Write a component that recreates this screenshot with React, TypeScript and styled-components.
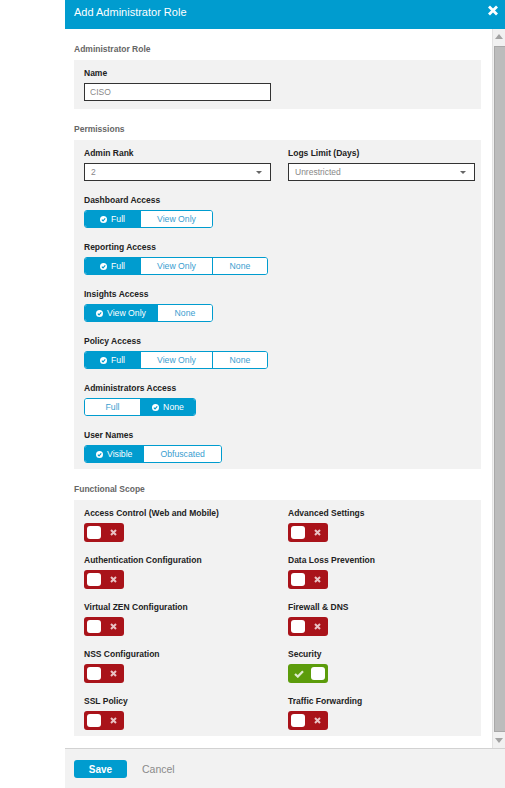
import styled, { createGlobalStyle } from "styled-components";

const BLUE = "#009ccf";

const GlobalStyle = createGlobalStyle`
  html, body {
    margin: 0;
    padding: 0;
    background: #fff;
  }
  body {
    font-family: "Liberation Sans", Arial, sans-serif;
  }
  * {
    box-sizing: border-box;
  }
`;

type Choice = { label: string; active?: boolean };

const permissionGroups: { title: string; choices: Choice[] }[] = [
    {
        title: "Dashboard Access",
        choices: [{ label: "Full", active: true }, { label: "View Only" }],
    },
    {
        title: "Reporting Access",
        choices: [
            { label: "Full", active: true },
            { label: "View Only" },
            { label: "None" },
        ],
    },
    {
        title: "Insights Access",
        choices: [{ label: "View Only", active: true }, { label: "None" }],
    },
    {
        title: "Policy Access",
        choices: [
            { label: "Full", active: true },
            { label: "View Only" },
            { label: "None" },
        ],
    },
    {
        title: "Administrators Access",
        choices: [{ label: "Full" }, { label: "None", active: true }],
    },
    {
        title: "User Names",
        choices: [{ label: "Visible", active: true }, { label: "Obfuscated" }],
    },
];

const scopes: { title: string; on?: boolean }[] = [
    { title: "Access Control (Web and Mobile)" },
    { title: "Advanced Settings" },
    { title: "Authentication Configuration" },
    { title: "Data Loss Prevention" },
    { title: "Virtual ZEN Configuration" },
    { title: "Firewall & DNS" },
    { title: "NSS Configuration" },
    { title: "Security", on: true },
    { title: "SSL Policy" },
    { title: "Traffic Forwarding" },
];

function CheckCircle() {
    return (
        <svg width="7" height="7" viewBox="0 0 8 8">
            <circle cx="4" cy="4" r="4" fill="#fff" />
            <path
                d="M2.1 4.1 L3.5 5.5 L6 2.8"
                stroke={BLUE}
                strokeWidth="1.3"
                fill="none"
            />
        </svg>
    );
}

function ScopeToggle({ on }: { on?: boolean }) {
    return (
        <Toggle $on={!!on}>
            <Knob />
            <Mark>
                {on ? (
                    <svg width="10" height="8" viewBox="0 0 10 8">
                        <path
                            d="M1 4 L3.8 6.6 L9 1.2"
                            stroke="rgba(255,255,255,0.8)"
                            strokeWidth="2.2"
                            fill="none"
                        />
                    </svg>
                ) : (
                    <svg width="7" height="7" viewBox="0 0 7 7">
                        <path
                            d="M1 1 L6 6 M6 1 L1 6"
                            stroke="rgba(255,255,255,0.75)"
                            strokeWidth="2"
                        />
                    </svg>
                )}
            </Mark>
        </Toggle>
    );
}

function Select({ value }: { value: string }) {
    return (
        <SelectBox>
            <span>{value}</span>
            <svg width="6" height="3" viewBox="0 0 6 3">
                <path d="M0 0 L6 0 L3 3z" fill="#666" />
            </svg>
        </SelectBox>
    );
}

function ScrollBar() {
    return (
        <ScrollRail>
            <ArrowButton>
                <svg width="8" height="5" viewBox="0 0 8 5">
                    <path d="M0 5 L4 0 L8 5z" fill="#a3a3a3" />
                </svg>
            </ArrowButton>
            <ScrollTrack>
                <ScrollThumb />
            </ScrollTrack>
            <ArrowButton>
                <svg width="8" height="5" viewBox="0 0 8 5">
                    <path d="M0 0 L8 0 L4 5z" fill="#a3a3a3" />
                </svg>
            </ArrowButton>
        </ScrollRail>
    );
}

export default function App() {
    return (
        <>
            <GlobalStyle />
            <Page>
                <Dialog>
                    <Header>
                        <Title>Add Administrator Role</Title>
                        <CloseButton aria-label="Close">
                            <svg width="12" height="11" viewBox="0 0 12 11">
                                <path
                                    d="M2 1.5 L10 9.5 M10 1.5 L2 9.5"
                                    stroke="#fff"
                                    strokeWidth="2.8"
                                />
                            </svg>
                        </CloseButton>
                    </Header>

                    <Body>
                        <Content>
                            <Section>
                                <SectionTitle>Administrator Role</SectionTitle>
                                <Panel $bottom={8}>
                                    <Field>
                                        <Label>Name</Label>
                                        <TextInput readOnly value="CISO" />
                                    </Field>
                                </Panel>
                            </Section>

                            <Section>
                                <SectionTitle>Permissions</SectionTitle>
                                <Panel>
                                    <Stack>
                                        <TwoColumns>
                                            <Field>
                                                <Label>Admin Rank</Label>
                                                <Select value="2" />
                                            </Field>
                                            <Field>
                                                <Label>Logs Limit (Days)</Label>
                                                <Select value="Unrestricted" />
                                            </Field>
                                        </TwoColumns>
                                        {permissionGroups.map((group) => (
                                            <Field key={group.title}>
                                                <Label>{group.title}</Label>
                                                <SegGroup>
                                                    {group.choices.map((c) => (
                                                        <SegButton
                                                            key={c.label}
                                                            $active={!!c.active}
                                                        >
                                                            {c.active && <CheckCircle />}
                                                            {c.label}
                                                        </SegButton>
                                                    ))}
                                                </SegGroup>
                                            </Field>
                                        ))}
                                    </Stack>
                                </Panel>
                            </Section>

                            <Section>
                                <SectionTitle>Functional Scope</SectionTitle>
                                <Panel>
                                    <ScopeGrid>
                                        {scopes.map((s) => (
                                            <Field key={s.title}>
                                                <Label>{s.title}</Label>
                                                <ScopeToggle on={s.on} />
                                            </Field>
                                        ))}
                                    </ScopeGrid>
                                </Panel>
                            </Section>
                        </Content>
                        <ScrollBar />
                    </Body>

                    <Footer>
                        <SaveButton>Save</SaveButton>
                        <CancelButton>Cancel</CancelButton>
                    </Footer>
                </Dialog>
            </Page>
        </>
    );
}

const Page = styled.div`
    height: 100vh;
    padding-left: 65px;
    display: flex;
`;

const Dialog = styled.div`
    width: 440px;
    height: 100%;
    display: flex;
    flex-direction: column;
    background: #fff;
`;

const Header = styled.header`
    height: 29px;
    flex: none;
    background: ${BLUE};
    display: flex;
    align-items: flex-start;
    justify-content: space-between;
    padding: 5px 6px 0 9px;
`;

const Title = styled.h1`
    margin: 0;
    font-size: 11px;
    font-weight: 400;
    line-height: 14px;
    color: #fff;
`;

const CloseButton = styled.button`
    border: none;
    background: none;
    padding: 0;
    width: 12px;
    height: 11px;
    display: flex;
    cursor: pointer;
`;

const Body = styled.main`
    flex: 1;
    min-height: 0;
    display: flex;
`;

const Content = styled.div`
    flex: 1;
    min-width: 0;
    overflow: hidden;
    padding: 0 11px 0 9px;
`;

const ScrollRail = styled.div`
    width: 13px;
    flex: none;
    display: flex;
    flex-direction: column;
    background: #f1f1f1;
    border-left: 1px solid #e2e2e2;
`;

const ArrowButton = styled.div`
    height: 15px;
    flex: none;
    display: flex;
    align-items: center;
    justify-content: center;
`;

const ScrollTrack = styled.div`
    flex: 1;
    padding: 2px 0 1px 1px;
    display: flex;
`;

const ScrollThumb = styled.div`
    flex: 1;
    background: #bcbcbc;
    border: 1px solid #a8a8a8;
    border-right: none;
`;

const Section = styled.section`
    margin-top: 13px;
`;

const SectionTitle = styled.h2`
    margin: 0 0 4px;
    font-size: 8.5px;
    font-weight: 700;
    line-height: 14px;
    color: #666;
`;

const Panel = styled.div<{ $bottom?: number }>`
    background: #f2f2f2;
    padding: 6px 6px ${(p) => p.$bottom ?? 6}px 10px;
`;

const Stack = styled.div`
    display: flex;
    flex-direction: column;
    gap: 12px;
`;

const TwoColumns = styled.div`
    display: grid;
    grid-template-columns: 187px 187px;
    column-gap: 17px;
`;

const ScopeGrid = styled.div`
    display: grid;
    grid-template-columns: 187px 187px;
    column-gap: 17px;
    row-gap: 11px;
`;

const Field = styled.div`
    display: flex;
    flex-direction: column;
    align-items: flex-start;
    gap: 3px;
`;

const Label = styled.label`
    font-size: 8.5px;
    font-weight: 700;
    line-height: 14px;
    color: #222;
`;

const TextInput = styled.input`
    width: 187px;
    height: 18px;
    border: 1px solid #333;
    border-radius: 0;
    padding: 0 5px;
    margin: 0;
    background: #fff;
    font-family: inherit;
    font-size: 8.5px;
    color: #888;
    outline: none;
`;

const SelectBox = styled.div`
    width: 187px;
    height: 18px;
    border: 1px solid #333;
    background: #fff;
    display: flex;
    align-items: center;
    justify-content: space-between;
    padding: 0 8px 0 6px;
    font-size: 8.5px;
    color: #888;
`;

const SegGroup = styled.div`
    display: inline-flex;
    height: 18px;
    border: 1px solid ${BLUE};
    border-radius: 3px;
    overflow: hidden;
    background: #fff;
`;

const SegButton = styled.button<{ $active: boolean }>`
    min-width: 55px;
    height: 100%;
    margin: 0;
    border: none;
    border-left: 1px solid ${BLUE};
    padding: 0 ${(p) => (p.$active ? "11px" : "16px")};
    display: flex;
    align-items: center;
    justify-content: center;
    gap: 4px;
    font-family: inherit;
    font-size: 8.7px;
    white-space: nowrap;
    background: ${(p) => (p.$active ? BLUE : "#fff")};
    color: ${(p) => (p.$active ? "#fff" : "#3a9ed0")};

    &:first-child {
        border-left: none;
    }
`;

const Toggle = styled.div<{ $on: boolean }>`
    width: 40px;
    height: 19px;
    border-radius: 3px;
    background: ${(p) => (p.$on ? "#5c9c0b" : "#a9131a")};
    display: flex;
    flex-direction: ${(p) => (p.$on ? "row-reverse" : "row")};
    align-items: center;
    justify-content: space-between;
    padding: 0 3px;
`;

const Knob = styled.span`
    width: 14px;
    height: 13px;
    border-radius: 3px;
    background: #fff;
`;

const Mark = styled.span`
    width: 16px;
    display: flex;
    justify-content: center;
    align-items: center;
`;

const Footer = styled.footer`
    height: 40px;
    flex: none;
    border-top: 1px solid #d2d2d2;
    background: #f2f2f2;
    display: flex;
    align-items: center;
    gap: 15px;
    padding: 1px 0 0 9px;
`;

const SaveButton = styled.button`
    width: 53px;
    height: 18px;
    border: none;
    border-radius: 3px;
    background: ${BLUE};
    color: #fff;
    font-family: inherit;
    font-size: 10px;
    font-weight: 700;
    padding: 0;
`;

const CancelButton = styled.button`
    border: none;
    background: none;
    padding: 0;
    font-family: inherit;
    font-size: 10.5px;
    color: #8a8a8a;
`;
